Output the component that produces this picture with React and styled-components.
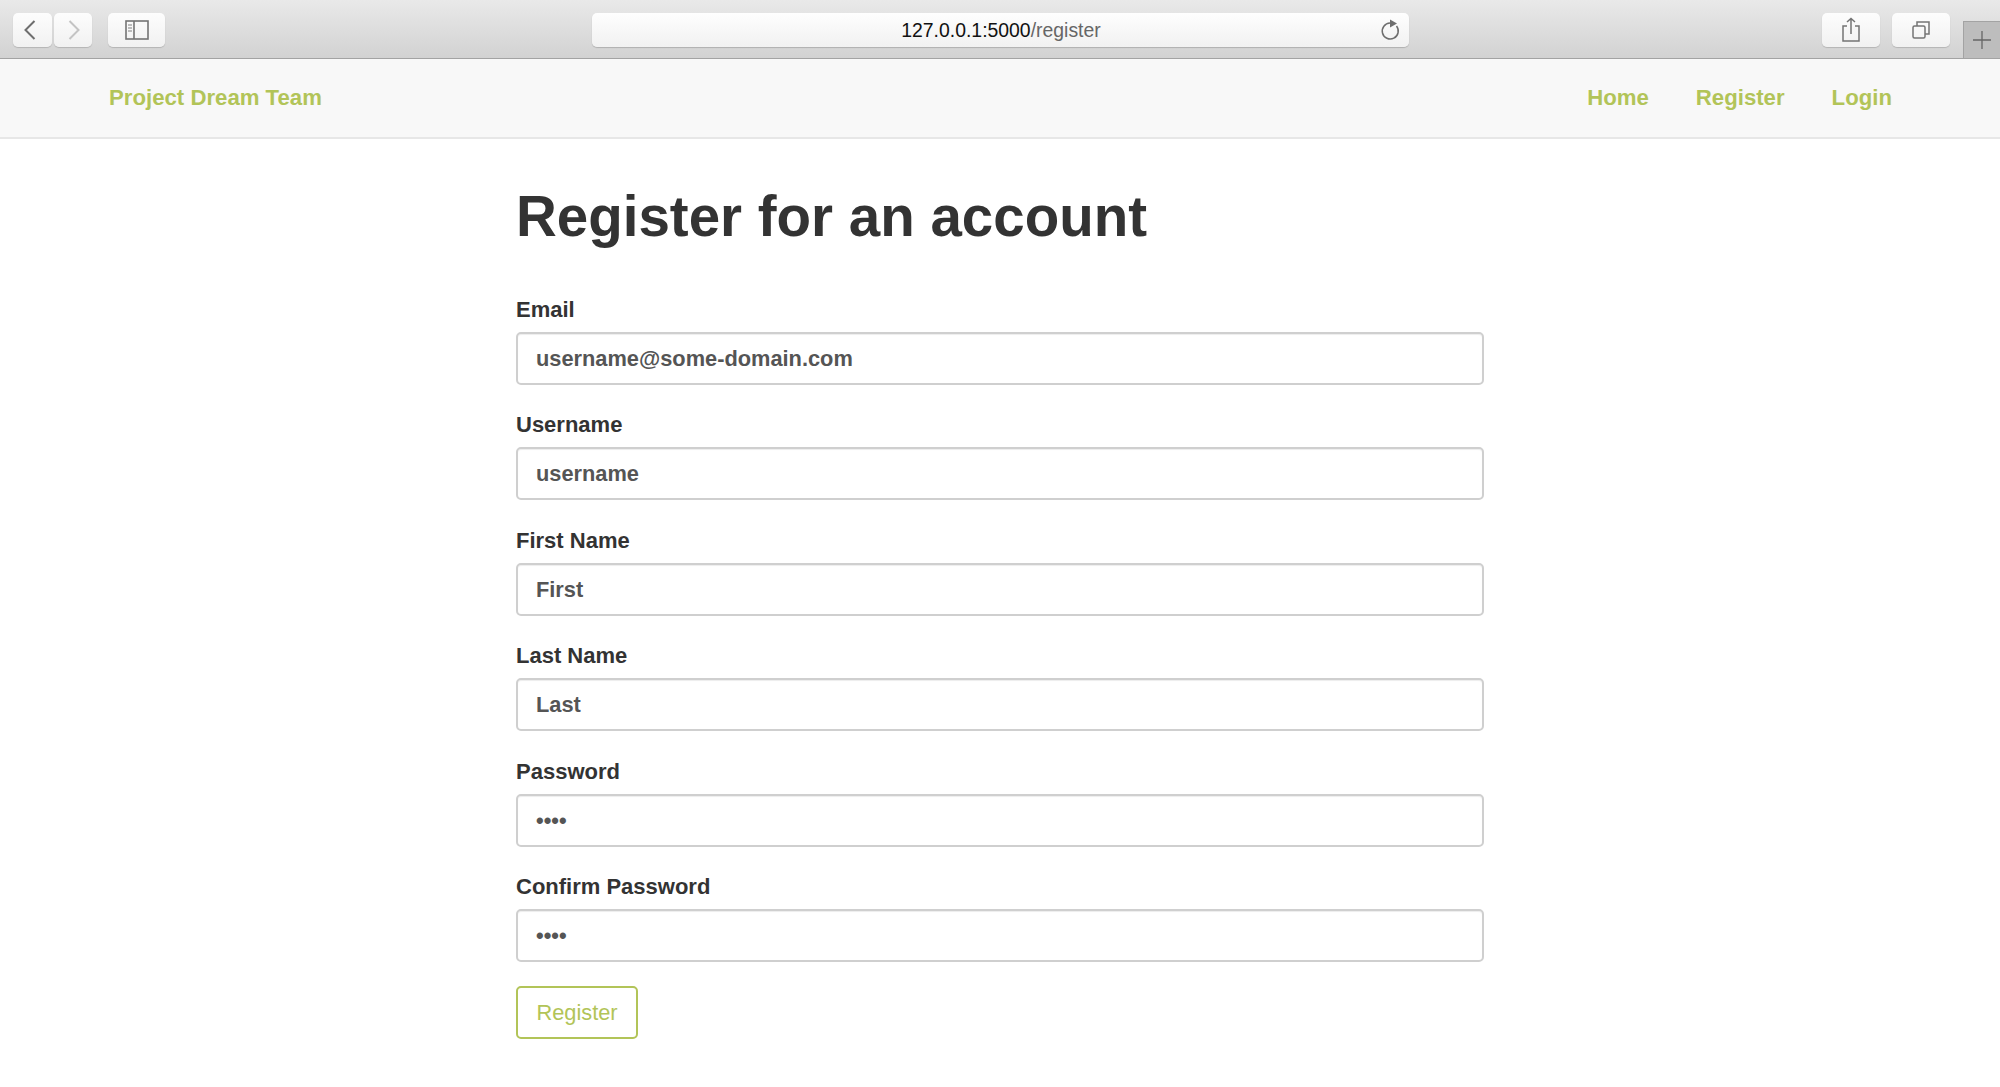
import styled, { createGlobalStyle } from 'styled-components';

const GlobalStyle = createGlobalStyle`
  html, body {
    margin: 0;
    padding: 0;
    background: #fff;
    font-family: "Liberation Sans", Arial, sans-serif;
  }
  * { box-sizing: border-box; }
`;

const BrowserBar = styled.div`
  display: flex;
  align-items: flex-start;
  height: 59px;
  padding-top: 13px;
  padding-left: 13px;
  background: linear-gradient(#e9e9e9, #d2d2d2);
  border-bottom: 1px solid #a3a3a3;
`;

const ToolButton = styled.div`
  display: flex;
  align-items: center;
  justify-content: center;
  width: ${(p) => p.$w}px;
  height: 34px;
  margin-left: ${(p) => p.$ml || 0}px;
  background: linear-gradient(#fdfdfd, #f1f1f1);
  border-radius: 5px;
  box-shadow: 0 1px 1px #b4b4b4;
`;

const AddressBar = styled.div`
  position: relative;
  display: flex;
  align-items: center;
  justify-content: center;
  width: 817px;
  height: 34px;
  margin-left: 427px;
  margin-right: 413px;
  padding-left: 1px;
  background: linear-gradient(#fefefe, #f1f1f1);
  border-radius: 5px;
  box-shadow: 0 1px 1px #b0b0b0;
  font-size: 19.4px;
  color: #111;
`;

const UrlPath = styled.span`
  color: #666;
`;

const Reload = styled.svg`
  position: absolute;
  right: 9px;
  top: 4px;
`;

const NewTab = styled.div`
  display: flex;
  align-items: center;
  justify-content: center;
  width: 37px;
  height: 37px;
  margin-top: 8px;
  margin-left: 13px;
  background: #bdbdbd;
  border-left: 1px solid #a3a3a3;
  border-top: 1px solid #a3a3a3;
`;

const Navbar = styled.nav`
  display: flex;
  align-items: center;
  justify-content: space-between;
  height: 80px;
  padding: 0 108px 0 109px;
  background: #f8f8f8;
  border-bottom: 2px solid #e7e7e7;
`;

const NavLink = styled.a`
  font-size: 22.2px;
  font-weight: bold;
  color: #b2c458;
`;

const NavLinks = styled.div`
  display: flex;
  gap: 47px;
`;

const Main = styled.main`
  width: 968px;
  margin: 0 auto;
`;

const Title = styled.h1`
  margin: 43px 0 42.5px;
  font-size: 56.5px;
  line-height: 70px;
  font-weight: bold;
  color: #333;
`;

const Field = styled.div`
  margin-bottom: 25.5px;
`;

const Label = styled.label`
  display: block;
  height: 37px;
  font-size: 22px;
  line-height: 25px;
  padding-top: 2px;
  font-weight: bold;
  color: #333;
`;

const Input = styled.input`
  display: block;
  width: 100%;
  height: 53px;
  padding: 1px 18px 0;
  background: #fff;
  border: 2px solid #cfcfcf;
  border-radius: 5px;
  box-shadow: inset 0 1px 1px rgba(0, 0, 0, 0.075);
  font-family: "Liberation Sans", Arial, sans-serif;
  font-size: 21.8px;
  font-weight: bold;
  color: #555;
  outline: none;
`;

const SubmitButton = styled.button`
  display: block;
  width: 122px;
  height: 53px;
  margin-top: -2px;
  padding: 1px 0 0;
  background: #fff;
  border: 2px solid #b2c458;
  border-radius: 5px;
  font-family: "Liberation Sans", Arial, sans-serif;
  font-size: 21.8px;
  color: #b2c458;
`;

const BackIcon = styled.svg`
  margin-left: -6px;
`;

const ForwardIcon = styled.svg`
  margin-left: 3px;
`;

const fields = [
  { label: 'Email', value: 'username@some-domain.com' },
  { label: 'Username', value: 'username' },
  { label: 'First Name', value: 'First' },
  { label: 'Last Name', value: 'Last' },
  { label: 'Password', value: 'pass', type: 'password' },
  { label: 'Confirm Password', value: 'pass', type: 'password' },
];

const App = () => (
  <>
    <GlobalStyle />
    <BrowserBar>
      <ToolButton $w={39}>
        <BackIcon width="13" height="22" viewBox="0 0 13 22" fill="none" stroke="#6e6e6e" strokeWidth="2">
          <path d="M11.5 2 L2.5 11 L11.5 20" />
        </BackIcon>
      </ToolButton>
      <ToolButton $w={38} $ml={2}>
        <ForwardIcon width="13" height="22" viewBox="0 0 13 22" fill="none" stroke="#c4c4c4" strokeWidth="2">
          <path d="M1.5 2 L10.5 11 L1.5 20" />
        </ForwardIcon>
      </ToolButton>
      <ToolButton $w={57} $ml={16}>
        <svg width="24" height="20" viewBox="0 0 24 20" fill="none" stroke="#747474" strokeWidth="1.6">
          <rect x="1" y="1" width="22" height="18" />
          <path d="M9 1 V19" />
          <path d="M3 5 H7 M3 8 H7 M3 11 H7" stroke="#a8a8a8" />
        </svg>
      </ToolButton>
      <AddressBar>
        127.0.0.1:5000<UrlPath>/register</UrlPath>
        <Reload width="20" height="24" viewBox="0 0 20 24" fill="none" stroke="#6e6e6e" strokeWidth="1.5">
          <path d="M10 6 A8 8 0 1 0 16.5 9" />
          <path d="M10 2.5 L10 10.5 L17 6.5 Z" fill="#6e6e6e" stroke="none" />
        </Reload>
      </AddressBar>
      <ToolButton $w={58}>
        <svg width="20" height="26" viewBox="0 0 20 26" fill="none" stroke="#747474" strokeWidth="1.5">
          <path d="M6 9 H2 V24 H18 V9 H14" />
          <path d="M10 17 V1.5 M6 5 L10 1.5 L14 5" />
        </svg>
      </ToolButton>
      <ToolButton $w={58} $ml={12}>
        <svg width="18" height="18" viewBox="0 0 18 18" fill="none" stroke="#747474" strokeWidth="1.5">
          <rect x="1" y="5" width="12" height="12" rx="1.5" />
          <path d="M5 5 V1 H17 V13 H13" />
        </svg>
      </ToolButton>
      <NewTab>
        <svg width="18" height="18" viewBox="0 0 18 18" stroke="#666" strokeWidth="1.3">
          <path d="M9 0 V18 M0 9 H18" />
        </svg>
      </NewTab>
    </BrowserBar>
    <Navbar>
      <NavLink>Project Dream Team</NavLink>
      <NavLinks>
        <NavLink>Home</NavLink>
        <NavLink>Register</NavLink>
        <NavLink>Login</NavLink>
      </NavLinks>
    </Navbar>
    <Main>
      <Title>Register for an account</Title>
      {fields.map((f) => (
        <Field key={f.label}>
          <Label>{f.label}</Label>
          <Input type={f.type || 'text'} value={f.value} readOnly />
        </Field>
      ))}
      <SubmitButton type="button">Register</SubmitButton>
    </Main>
  </>
);

export default App;
